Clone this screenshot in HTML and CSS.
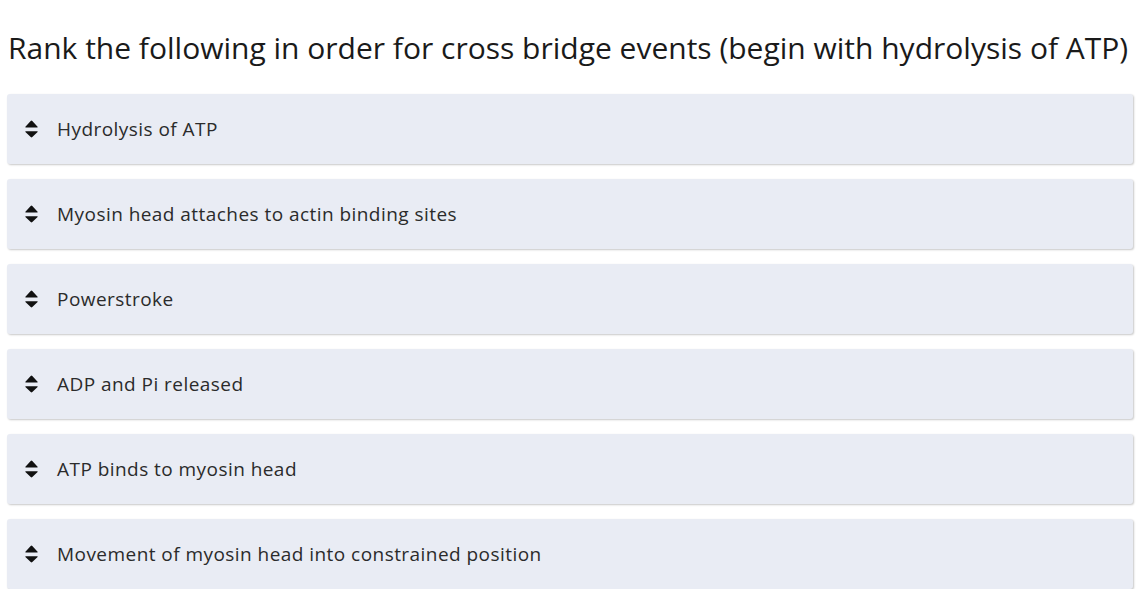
FILE: index.html
```html
<!DOCTYPE html>
<html>
<head>
<meta charset="utf-8">
<link rel="stylesheet" href="styles.css">
</head>
<body>
<div class="page">
  <h1 class="title">Rank the following in order for cross bridge events (begin with hydrolysis of ATP)</h1>
  <ul class="rank-list">
    <li class="rank-item"><svg class="sort-icon" viewBox="0 0 13 18"><path d="M5.7 0.9 Q6.5 0 7.3 0.9 L12.6 6.8 Q13 7.6 12.2 7.6 H0.8 Q0 7.6 0.4 6.8 Z M0.8 11.2 H12.2 Q13 11.2 12.6 12 L7.3 17.1 Q6.5 18 5.7 17.1 L0.4 12 Q0 11.2 0.8 11.2 Z"/></svg><span>Hydrolysis of ATP</span></li>
    <li class="rank-item"><svg class="sort-icon" viewBox="0 0 13 18"><path d="M5.7 0.9 Q6.5 0 7.3 0.9 L12.6 6.8 Q13 7.6 12.2 7.6 H0.8 Q0 7.6 0.4 6.8 Z M0.8 11.2 H12.2 Q13 11.2 12.6 12 L7.3 17.1 Q6.5 18 5.7 17.1 L0.4 12 Q0 11.2 0.8 11.2 Z"/></svg><span>Myosin head attaches to actin binding sites</span></li>
    <li class="rank-item"><svg class="sort-icon" viewBox="0 0 13 18"><path d="M5.7 0.9 Q6.5 0 7.3 0.9 L12.6 6.8 Q13 7.6 12.2 7.6 H0.8 Q0 7.6 0.4 6.8 Z M0.8 11.2 H12.2 Q13 11.2 12.6 12 L7.3 17.1 Q6.5 18 5.7 17.1 L0.4 12 Q0 11.2 0.8 11.2 Z"/></svg><span>Powerstroke</span></li>
    <li class="rank-item"><svg class="sort-icon" viewBox="0 0 13 18"><path d="M5.7 0.9 Q6.5 0 7.3 0.9 L12.6 6.8 Q13 7.6 12.2 7.6 H0.8 Q0 7.6 0.4 6.8 Z M0.8 11.2 H12.2 Q13 11.2 12.6 12 L7.3 17.1 Q6.5 18 5.7 17.1 L0.4 12 Q0 11.2 0.8 11.2 Z"/></svg><span>ADP and Pi released</span></li>
    <li class="rank-item"><svg class="sort-icon" viewBox="0 0 13 18"><path d="M5.7 0.9 Q6.5 0 7.3 0.9 L12.6 6.8 Q13 7.6 12.2 7.6 H0.8 Q0 7.6 0.4 6.8 Z M0.8 11.2 H12.2 Q13 11.2 12.6 12 L7.3 17.1 Q6.5 18 5.7 17.1 L0.4 12 Q0 11.2 0.8 11.2 Z"/></svg><span>ATP binds to myosin head</span></li>
    <li class="rank-item"><svg class="sort-icon" viewBox="0 0 13 18"><path d="M5.7 0.9 Q6.5 0 7.3 0.9 L12.6 6.8 Q13 7.6 12.2 7.6 H0.8 Q0 7.6 0.4 6.8 Z M0.8 11.2 H12.2 Q13 11.2 12.6 12 L7.3 17.1 Q6.5 18 5.7 17.1 L0.4 12 Q0 11.2 0.8 11.2 Z"/></svg><span>Movement of myosin head into constrained position</span></li>
  </ul>
</div>
</body>
</html>
```

FILE: styles.css
```css
html, body {
  margin: 0;
  padding: 0;
  background: #ffffff;
}
body {
  font-family: "Open Sans", "Liberation Sans", sans-serif;
  color: #222222;
}
.page {
  padding: 0 14px 0 7px;
}
.title {
  margin: 0;
  padding: 28px 0 0 1px;
  font-size: 30px;
  font-weight: 400;
  line-height: 40px;
  color: #1a1a1a;
  white-space: nowrap;
}
.rank-list {
  list-style: none;
  margin: 26px 0 0 0;
  padding: 0;
  display: flex;
  flex-direction: column;
  gap: 15px;
}
.rank-item {
  height: 70px;
  box-sizing: border-box;
  background: #e9ecf4;
  border-radius: 3px;
  box-shadow: 1px 1px 2px rgba(0, 0, 0, 0.22);
  display: flex;
  align-items: center;
  padding-left: 18px;
  font-size: 19px;
  letter-spacing: 0.45px;
  color: #2b2b2b;
}
.sort-icon {
  width: 13px;
  height: 18px;
  fill: #111111;
  margin-right: 19px;
  flex: none;
}
```
